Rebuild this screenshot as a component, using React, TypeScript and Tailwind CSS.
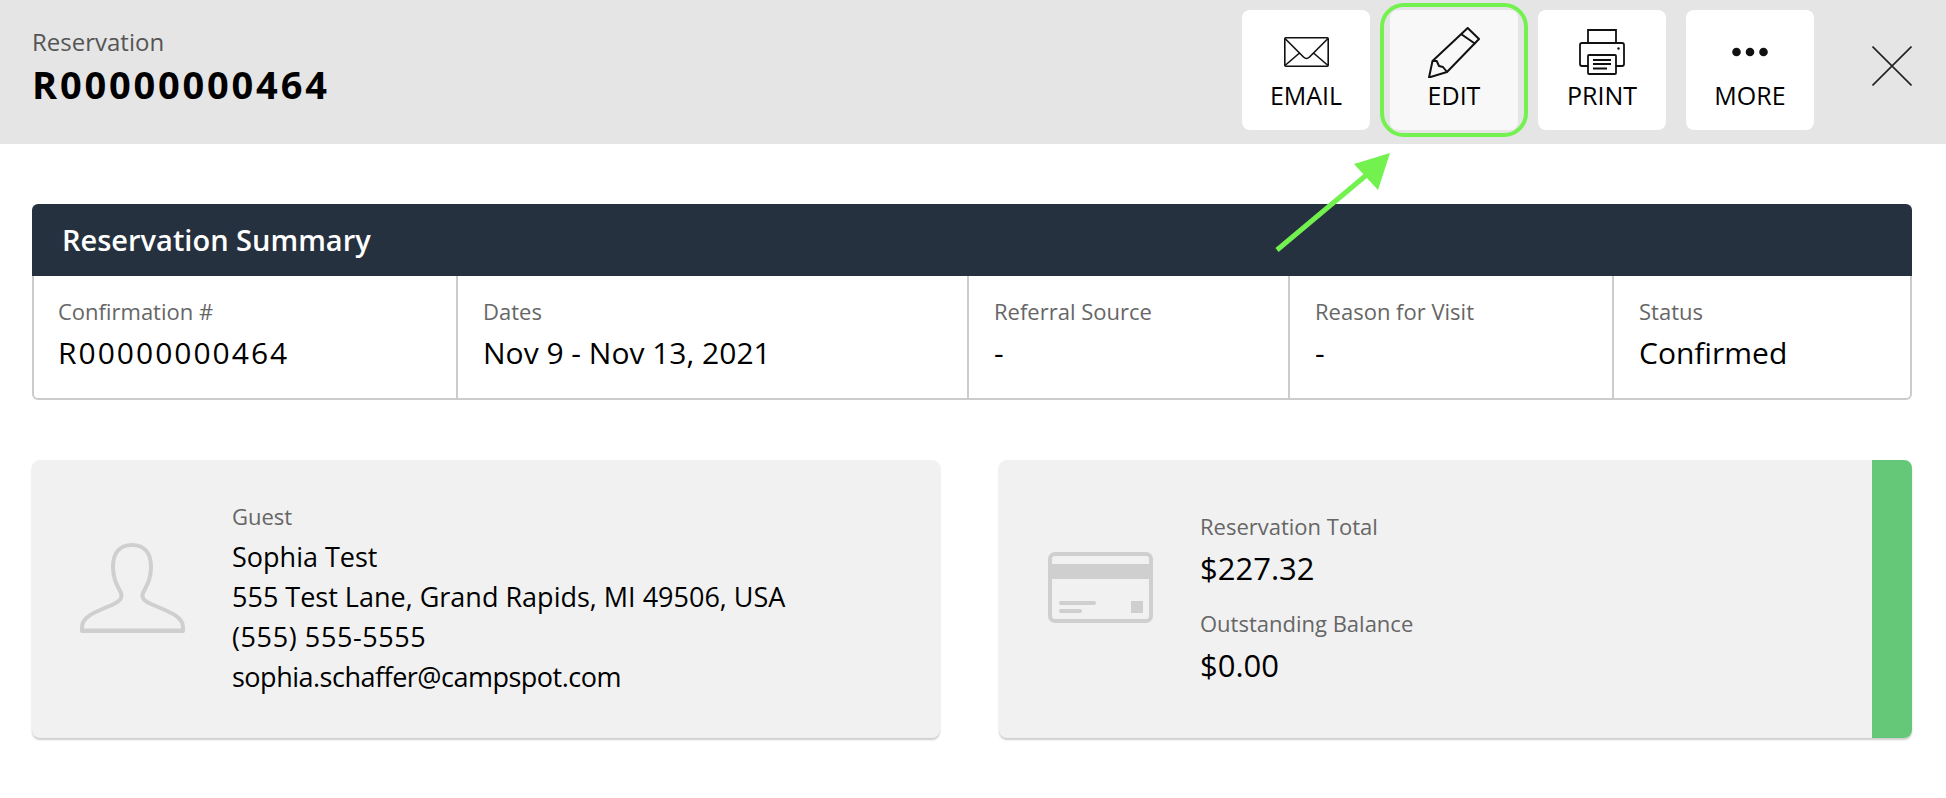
import React from "react";

const Mail = () => (
  <svg width="45" height="30" viewBox="0 0 45 30" fill="none" stroke="#111" strokeWidth="1.6">
    <rect x="0.8" y="0.8" width="43.4" height="28.4" rx="1" />
    <path d="M1 1.5 L19.5 20 Q22.5 23 25.5 20 L44 1.5 M1 28.5 L15.5 16 M44 28.5 L29.5 16" />
  </svg>
);

const Printer = () => (
  <svg width="46" height="46" viewBox="0 0 46 46" fill="none" stroke="#111" strokeWidth="1.8">
    <path d="M9 14 V1 H37 V14" />
    <path d="M9 37 H3 Q1 37 1 35 V16 Q1 14 3 14 H43 Q45 14 45 16 V35 Q45 37 43 37 H37" />
    <rect x="9" y="26" width="28" height="19" rx="1" />
    <path d="M14 31 H32 M14 35 H32 M14 39.5 H28" />
    <circle cx="39.5" cy="19.5" r="1.2" fill="#111" stroke="none" />
  </svg>
);

const Dots = () => (
  <svg width="36" height="10" viewBox="0 0 36 10" fill="#111">
    <circle cx="4.5" cy="5" r="4.3" />
    <circle cx="18" cy="5" r="4.3" />
    <circle cx="31.5" cy="5" r="4.3" />
  </svg>
);

const Person = () => (
  <svg width="105" height="90" viewBox="0 0 105 90" fill="none" stroke="#cfcfcf" strokeWidth="4" strokeLinejoin="round">
    <path d="M52 2 C39 2 33 11 33 24 C33 36 37 42 41 50 C43 55 40 58 34 61 C18 68 2 73 2 84 V88 H103 V84 C103 73 87 68 71 61 C64 58 61 55 63 50 C67 42 71 36 71 24 C71 11 65 2 52 2 Z" />
    <path d="M2 88 H103" strokeWidth="5" />
  </svg>
);

const Card = () => (
  <svg width="105" height="71" viewBox="0 0 105 71" fill="none">
    <rect x="2" y="2" width="101" height="67" rx="5" stroke="#cfcfcf" strokeWidth="4" />
    <rect x="3" y="12" width="99" height="15" fill="#cfcfcf" />
    <rect x="11" y="49" width="37" height="4" rx="2" fill="#cfcfcf" />
    <rect x="11" y="57" width="23" height="4" rx="2" fill="#cfcfcf" />
    <rect x="83" y="49" width="12" height="12" fill="#cfcfcf" />
  </svg>
);

const PencilIcon = () => (
  <svg width="52" height="51" viewBox="0 0 52 51" fill="none" stroke="#111" strokeWidth="2" strokeLinejoin="round">
    <path d="M39.7 1 L51 12 L19 45 L1 50.5 L4.5 34 Z" />
    <path d="M33 7 L47.5 17" />
    <path d="M4.5 34 L8.7 34 L11 39 L15 40 L19 45" />
  </svg>
);

const Action = ({ label, icon, active }: { label: string; icon: React.ReactNode; active?: boolean }) => (
  <div className={`relative w-[128px] h-[120px] rounded-[8px] flex flex-col items-center pt-4 ${active ? "bg-[#f8f8f8]" : "bg-white"}`}>
    <div className="h-[52px] flex items-center justify-center">{icon}</div>
    <div className="mt-[2px] text-[25px] leading-[30px] text-black">{label}</div>
    {active && <div className="absolute -inset-x-[10px] -inset-y-[7px] border-[4px] border-[#73f14f] rounded-[24px]" />}
  </div>
);

const Cell = ({ label, value, w, last, pad, track }: { label: string; value: string; w: string; last?: boolean; pad: string; track?: string }) => (
  <div className={`${w} ${pad} pt-[19px] ${last ? "" : "border-r-2 border-[#cccccc]"}`}>
    <div className="text-[22px] leading-[32px] text-[#666666]">{label}</div>
    <div className={`mt-[6px] text-[30px] leading-[40px] text-black ${track ?? ""}`}>{value}</div>
  </div>
);

export default function App() {
  return (
    <div className="relative w-[1946px] h-[798px] bg-white overflow-hidden" style={{ fontFamily: '"Open Sans", "Lato", sans-serif' }}>
      <header className="h-[144px] bg-[#e5e5e5] flex items-start justify-between pl-[32px] pr-[34px]">
        <div className="pt-[26px]">
          <div className="text-[24px] leading-[32px] text-[#555555]">Reservation</div>
          <div className="text-[38px] leading-[53px] font-bold tracking-[2.8px] text-black">R00000000464</div>
        </div>
        <div className="flex items-start pt-[10px]">
          <div className="flex gap-[20px]">
            <Action label="EMAIL" icon={<Mail />} />
            <Action label="EDIT" icon={<PencilIcon />} active />
            <Action label="PRINT" icon={<Printer />} />
            <Action label="MORE" icon={<Dots />} />
          </div>
          <svg className="ml-[58px] mt-[36px]" width="40" height="40" viewBox="0 0 40 40" stroke="#222" strokeWidth="1.6" fill="none">
            <path d="M0.5 0.5 L39.5 39.5 M39.5 0.5 L0.5 39.5" />
          </svg>
        </div>
      </header>

      <section className="mx-[32px] mt-[60px] w-[1880px]">
        <div className="h-[72px] bg-[#263140] rounded-t-[6px] flex items-center pl-[30px] text-[29px] font-semibold text-white">Reservation Summary</div>
        <div className="h-[124px] flex border-x-2 border-b-2 border-[#cccccc] rounded-b-[6px]">
          <Cell w="w-[424px]" pad="px-[24px]" track="tracking-[2px]" label="Confirmation #" value="R00000000464" />
          <Cell w="w-[511px]" pad="px-[25px]" label="Dates" value="Nov 9 - Nov 13, 2021" />
          <Cell w="w-[321px]" pad="px-[25px]" label="Referral Source" value="-" />
          <Cell w="w-[324px]" pad="px-[25px]" label="Reason for Visit" value="-" />
          <Cell w="flex-1" pad="px-[25px]" label="Status" value="Confirmed" last />
        </div>
      </section>

      <div className="ml-[32px] mt-[60px] flex gap-[59px]">
        <div className="w-[908px] h-[278px] bg-[#f1f1f1] rounded-[8px] shadow-[0_2px_2px_rgba(0,0,0,0.2)] flex">
          <div className="ml-[48px] mt-[83px]"><Person /></div>
          <div className="ml-[47px] pt-[40px]">
            <div className="text-[22px] leading-[32px] text-[#666666]">Guest</div>
            <div className="mt-[5px] text-[27px] leading-[40px] text-black">
              <div>Sophia Test</div>
              <div>555 Test Lane, Grand Rapids, MI 49506, USA</div>
              <div className="tracking-[0.6px]">(555) 555-5555</div>
              <div className="tracking-[-0.5px]">sophia.schaffer@campspot.com</div>
            </div>
          </div>
        </div>
        <div className="w-[913px] h-[278px] bg-[#f1f1f1] rounded-[8px] shadow-[0_2px_2px_rgba(0,0,0,0.2)] flex overflow-hidden">
          <div className="ml-[49px] mt-[92px]"><Card /></div>
          <div className="ml-[47px] pt-[50px] flex-1">
            <div className="text-[22px] leading-[32px] text-[#666666]">Reservation Total</div>
            <div className="mt-[6px] text-[31px] leading-[40px] text-black">$227.32</div>
            <div className="mt-[19px] text-[22px] leading-[32px] text-[#666666]">Outstanding Balance</div>
            <div className="mt-[6px] text-[31px] leading-[40px] text-black">$0.00</div>
          </div>
          <div className="w-[40px] bg-[#65c878]" />
        </div>
      </div>

      <svg className="absolute left-[1270px] top-[150px]" width="130" height="106" viewBox="0 0 130 106" fill="none">
        <path d="M7 100 L106 17" stroke="#73f14f" strokeWidth="5" />
        <path d="M120 3 L84 14 L108 40 Z" fill="#73f14f" />
      </svg>
    </div>
  );
}
